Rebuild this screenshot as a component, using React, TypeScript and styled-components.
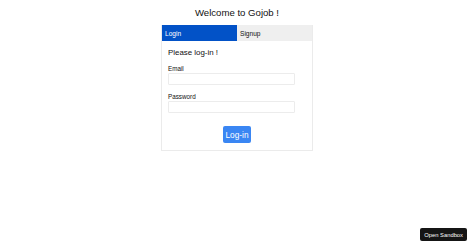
import React, { useState } from 'react';
import styled, { createGlobalStyle } from 'styled-components';

const GlobalStyle = createGlobalStyle`
  html, body {
    margin: 0;
    padding: 0;
    background: #fff;
    font-family: "Liberation Sans", Arial, sans-serif;
    color: #111;
  }
  * { box-sizing: border-box; }
`;

const Page = styled.div`
  width: 474px;
  height: 248px;
  position: relative;
  display: flex;
  flex-direction: column;
  align-items: center;
`;

const Title = styled.h1`
  margin: 7px 0 0;
  font-size: 9.6px;
  font-weight: 400;
  line-height: 12px;
`;

const Card = styled.div`
  margin-top: 6px;
  width: 152px;
  border: 1px solid #ebebeb;
  border-top: none;
`;

const Tabs = styled.div`
  display: flex;
  height: 16px;
`;

const Tab = styled.button<{ $active: boolean }>`
  flex: 1;
  border: none;
  margin: 0;
  padding: 0 3px;
  text-align: left;
  font-family: inherit;
  font-size: 6.6px;
  background: ${p => (p.$active ? '#0252c7' : '#efefef')};
  color: ${p => (p.$active ? '#fff' : '#111')};
  cursor: pointer;
`;

const Body = styled.div`
  padding: 7px 6px 7px;
  display: flex;
  flex-direction: column;
`;

const Heading = styled.h2`
  margin: 0 0 7px;
  font-size: 7.9px;
  font-weight: 400;
  line-height: 10px;
`;

const Label = styled.label`
  font-size: 6.3px;
  line-height: 8px;
`;

const Input = styled.input`
  margin: 0 0 8px;
  width: 127px;
  height: 12px;
  border: 1px solid #ececec;
  border-radius: 1px;
  outline: none;
  padding: 0 2px;
  font-size: 7px;
`;

const Submit = styled.button`
  align-self: center;
  margin-top: 5px;
  height: 17px;
  padding: 0 2.5px;
  border: none;
  border-radius: 2px;
  background: #3a86f3;
  color: #fff;
  font-family: inherit;
  font-size: 8.3px;
  cursor: pointer;
`;

const Sandbox = styled.button`
  position: absolute;
  right: 7px;
  bottom: 7px;
  height: 13px;
  padding: 0 4px;
  border: none;
  border-radius: 2px;
  background: #151515;
  color: #fff;
  font-family: inherit;
  font-size: 5.8px;
`;

export default function App() {
  const [tab, setTab] = useState<'login' | 'signup'>('login');
  return (
    <Page>
      <GlobalStyle />
      <Title>Welcome to Gojob !</Title>
      <Card>
        <Tabs>
          <Tab $active={tab === 'login'} onClick={() => setTab('login')}>Login</Tab>
          <Tab $active={tab === 'signup'} onClick={() => setTab('signup')}>Signup</Tab>
        </Tabs>
        <Body>
          <Heading>Please log-in !</Heading>
          <Label>Email</Label>
          <Input type="email" />
          <Label>Password</Label>
          <Input type="password" />
          <Submit>Log-in</Submit>
        </Body>
      </Card>
      <Sandbox>Open Sandbox</Sandbox>
    </Page>
  );
}
